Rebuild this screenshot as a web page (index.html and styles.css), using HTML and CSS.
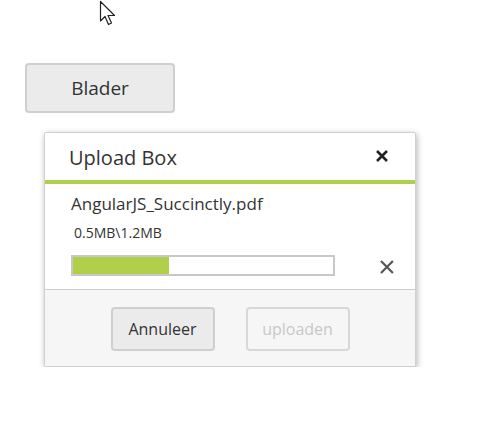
FILE: index.html
```html
<!DOCTYPE html>
<html lang="en">

<head>
  <meta charset="UTF-8" />
  <meta name="viewport" content="width=device-width, initial-scale=1.0" />
  <title>Upload Box</title>
  <link rel="stylesheet" href="styles.css">
</head>

<body>
  <svg class="cursor" width="20" height="30" viewBox="0 0 20 30">
    <path d="M1.5 1.5 L1.5 21 L6 16.5 L9.5 24.5 L12.5 23 L9 15.5 L15.5 15.5 Z" fill="#fff" stroke="#222" stroke-width="1.2" stroke-linejoin="round" />
  </svg>
  <div class="page">
    <button class="btn browse">Blader</button>

    <div class="dialog">
      <div class="dialog-header">
        <span class="dialog-title">Upload Box</span>
        <svg class="close" width="14" height="12" viewBox="0 0 14 12">
          <path d="M2 1 L12 11 M12 1 L2 11" stroke="#222" stroke-width="2.6" />
        </svg>
      </div>
      <div class="dialog-content">
        <div class="file-name">AngularJS_Succinctly.pdf</div>
        <div class="file-size">0.5MB\1.2MB</div>
        <div class="progress-row">
          <div class="progress">
            <div class="progress-fill" style="width: 37%"></div>
          </div>
          <svg class="remove" width="16" height="14" viewBox="0 0 16 14">
            <path d="M2 1 L14 13 M14 1 L2 13" stroke="#555" stroke-width="2.2" />
          </svg>
        </div>
      </div>
      <div class="dialog-footer">
        <button class="btn">Annuleer</button>
        <button class="btn disabled" disabled>uploaden</button>
      </div>
    </div>
  </div>
</body>

</html>
```
FILE: styles.css
```css
body {
  margin: 0;
  font-family: "Open Sans", "Noto Sans", sans-serif;
  color: #333;
  background: #fff;
}

.cursor {
  position: absolute;
  left: 99px;
  top: 0;
}

.page {
  padding: 63px 0 0 25px;
}

.btn {
  font-family: inherit;
  font-size: 16px;
  color: #333;
  background: #ebebeb;
  border: 2px solid #cfcfcf;
  border-radius: 4px;
  width: 104px;
  height: 44px;
  padding: 0;
}

.browse {
  display: block;
  width: 150px;
  height: 50px;
  font-size: 19px;
}

.disabled {
  background: #f6f6f6;
  color: #c8c8c8;
  border-color: #d8d8d8;
}

.dialog {
  margin: 19px 0 0 19px;
  width: 372px;
  height: 235px;
  border: 1px solid #d0d0d0;
  box-sizing: border-box;
  border-radius: 2px;
  box-shadow: 1px 2px 6px rgba(0, 0, 0, 0.3);
  display: flex;
  flex-direction: column;
  background: #fff;
}

.dialog-header {
  height: 47px;
  display: flex;
  align-items: center;
  justify-content: space-between;
  padding: 0 26px 0 24px;
  border-bottom: 4px solid #b0d04a;
}

.dialog-title {
  font-size: 20px;
  color: #333;
  padding-top: 2px;
}

.close {
  margin-top: -2px;
}

.dialog-content {
  height: 106px;
  padding: 9px 20px 0 26px;
  box-sizing: border-box;
  border-bottom: 1px solid #cccccc;
}

.file-name {
  font-size: 17px;
  line-height: 22px;
}

.file-size {
  font-size: 14px;
  line-height: 18px;
  margin: 9px 0 0 3px;
}

.progress-row {
  display: flex;
  align-items: center;
  margin-top: 13px;
}

.progress {
  width: 266px;
  height: 21px;
  border: 2px solid #c8c8c8;
  box-sizing: border-box;
}

.progress-fill {
  height: 100%;
  background: #b0d04a;
}

.remove {
  margin: 3px 0 0 44px;
}

.dialog-footer {
  flex: 1;
  background: #f6f6f6;
  display: flex;
  justify-content: center;
  align-items: flex-start;
  gap: 31px;
  padding-top: 17px;
}
```
